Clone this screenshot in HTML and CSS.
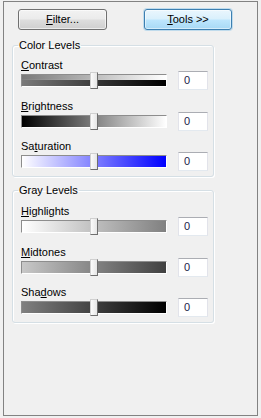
FILE: index.html
```html
<!DOCTYPE html>
<html>
<head>
<meta charset="utf-8">
<link rel="stylesheet" href="styles.css">
</head>
<body>
<div class="frame">
  <div class="buttons">
    <button class="btn btn-filter"><u>F</u>ilter...</button>
    <button class="btn btn-tools"><u>T</u>ools &gt;&gt;</button>
  </div>
  <fieldset class="group group-color">
    <legend>Color Levels</legend>
    <div class="row">
      <div class="label"><u>C</u>ontrast</div>
      <div class="ctl">
        <div class="track track-contrast"><span class="half half-left"></span><span class="half half-right"></span><span class="thumb"></span></div>
        <div class="edit">0</div>
      </div>
    </div>
    <div class="row">
      <div class="label"><u>B</u>rightness</div>
      <div class="ctl">
        <div class="track track-brightness"><span class="thumb"></span></div>
        <div class="edit">0</div>
      </div>
    </div>
    <div class="row">
      <div class="label">Sa<u>t</u>uration</div>
      <div class="ctl">
        <div class="track track-saturation"><span class="thumb"></span></div>
        <div class="edit">0</div>
      </div>
    </div>
  </fieldset>
  <fieldset class="group group-gray">
    <legend>Gray Levels</legend>
    <div class="row">
      <div class="label"><u>H</u>ighlights</div>
      <div class="ctl">
        <div class="track track-highlights"><span class="thumb"></span></div>
        <div class="edit">0</div>
      </div>
    </div>
    <div class="row">
      <div class="label"><u>M</u>idtones</div>
      <div class="ctl">
        <div class="track track-midtones"><span class="thumb"></span></div>
        <div class="edit">0</div>
      </div>
    </div>
    <div class="row">
      <div class="label">Sha<u>d</u>ows</div>
      <div class="ctl">
        <div class="track track-shadows"><span class="thumb"></span></div>
        <div class="edit">0</div>
      </div>
    </div>
  </fieldset>
</div>
</body>
</html>
```

FILE: styles.css
```css
html, body {
  margin: 0;
  padding: 0;
  background: #f0f0f0;
}
body {
  font-family: "Liberation Sans", Arial, sans-serif;
  font-size: 11px;
  color: #000;
}
.frame {
  box-sizing: border-box;
  width: 255px;
  height: 415px;
  margin: 1px 0 0 3px;
  border: 1px solid #828282;
  padding: 7px 0 0 0;
}
.buttons {
  display: flex;
  gap: 37px;
  padding-left: 14px;
}
.btn {
  box-sizing: border-box;
  height: 21px;
  margin: 0;
  padding: 0 0 1px 0;
  font: inherit;
  color: #000;
  border: 1px solid #707070;
  border-radius: 3px;
  background: linear-gradient(to bottom, #f2f2f2 0%, #ebebeb 48%, #dddddd 52%, #cfcfcf 100%);
  box-shadow: inset 0 0 0 1px rgba(255,255,255,0.6);
}
.btn-filter { width: 89px; }
.btn-tools {
  width: 88px;
  border-color: #3c7fb1;
  background: linear-gradient(to bottom, #eaf6fd 0%, #d9f0fc 48%, #bee6fd 52%, #a7d9f5 100%);
  box-shadow: inset 0 0 0 1px rgba(255,255,255,0.5), 0 0 0 1px rgba(104,180,230,0.35);
}
.btn u, .label u { text-decoration-thickness: 1px; text-underline-offset: 1px; }

.group {
  box-sizing: border-box;
  width: 202px;
  margin: 0 0 0 8px;
  padding: 8px 5px 5px 8px;
  border: 1px solid #d5dfe5;
  border-radius: 3px;
  box-shadow: inset 1px 1px 0 #fff, 1px 1px 0 #fff;
  min-width: 0;
}
.group-color { margin-top: 9px; }
.group-gray { margin-top: 7px; padding-top: 9px; }
.group legend {
  padding: 0 1px;
  margin-left: -3px;
  line-height: 13px;
}
.row + .row { margin-top: 10.5px; }
.label {
  line-height: 11px;
  height: 11px;
  white-space: nowrap;
}
.ctl {
  display: flex;
  align-items: center;
  gap: 11px;
  height: 19px;
}
.track {
  position: relative;
  box-sizing: border-box;
  width: 146px;
  height: 13px;
  border: 1px solid;
  border-color: #8d8d8d #ffffff #ffffff #8d8d8d;
  display: flex;
}
.thumb {
  position: absolute;
  left: 68px;
  top: -3px;
  box-sizing: border-box;
  width: 8px;
  height: 17px;
  border: 1px solid;
  border-color: #d0d0d0 #6f6f6f #6f6f6f #d0d0d0;
  background: linear-gradient(to right, #fbfbfb, #e6e6e6);
}
.track-contrast .half {
  flex: 1;
}
.track-contrast .half-left {
  background:
    linear-gradient(to right, #7a7a7a, #b8b8b8) top / 100% 45% no-repeat,
    linear-gradient(to right, #7a7a7a, #3c3c3c) bottom / 100% 55% no-repeat;
}
.track-contrast .half-right {
  background:
    linear-gradient(to right, #bcbcbc, #ffffff) top / 100% 45% no-repeat,
    linear-gradient(to right, #383838, #000000) bottom / 100% 55% no-repeat;
}
.track-brightness { background: linear-gradient(to right, #000, #fff); }
.track-saturation { background: linear-gradient(to right, #fff, #00f); }
.track-highlights { background: linear-gradient(to right, #fff, #808080); }
.track-midtones { background: linear-gradient(to right, #c8c8c8, #404040); }
.track-shadows { background: linear-gradient(to right, #808080, #000); }
.edit {
  box-sizing: border-box;
  width: 30px;
  height: 19px;
  background: #fff;
  border: 1px solid;
  border-color: #abadb3 #e2e3ea #e3e9ef #e2e3ea;
  padding-left: 5px;
  line-height: 17px;
  color: #1a1a4a;
}
```
